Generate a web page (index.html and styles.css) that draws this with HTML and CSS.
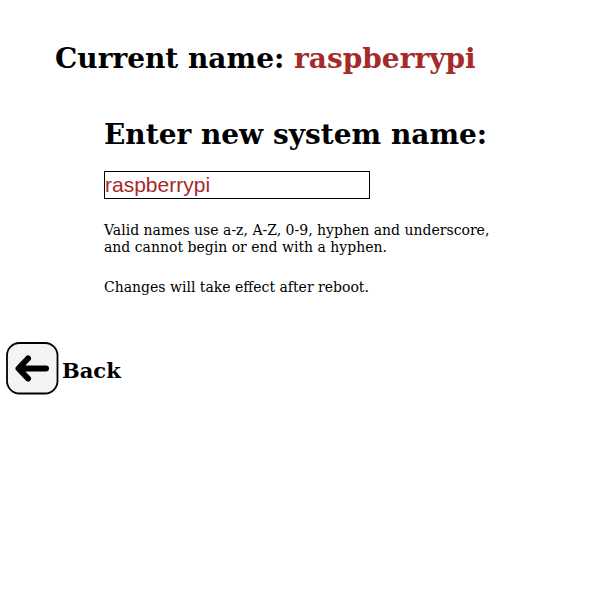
FILE: index.html
```html
<!DOCTYPE html>
<html lang="en">
    <head>
        <meta charset="UTF-8">
        <meta name="viewport" content="width=device-width, initial-scale=1.0">
        <title>System name</title>
        <link rel="stylesheet" href="styles.css">
    </head>
    <body>

        <h1 class="current">Current name: <span class="name">raspberrypi</span></h1>

        <!-- new name form -->
        <form class="rename">
            <h1><label for="hostname">Enter new system name:</label></h1>
            <input type="text" id="hostname" name="hostname" class="name" value="raspberrypi">
            <p>Valid names use a-z, A-Z, 0-9, hyphen and underscore,<br>
            and cannot begin or end with a hyphen.</p>
            <p class="note">Changes will take effect after reboot.</p>
        </form>

        <!-- back link -->
        <a href="index.html" class="back">
            <svg width="54" height="54" viewBox="0 0 54 54" aria-hidden="true">
                <rect x="2" y="2" width="50.500" height="50.500" rx="12.500" fill="#f4f4f4" stroke="#000" stroke-width="1.800"/>
                <path d="M23 17.500L13.500 27.500L23 37.500M14 27.500H41" fill="none" stroke="#000" stroke-width="6" stroke-linecap="round" stroke-linejoin="round"/>
            </svg>
            <span>Back</span>
        </a>

    </body>
</html>
```

FILE: styles.css
```css
body {
    font-family: "DejaVu Serif", serif;
    margin: 0;
    padding: 41px 5px;
    color: #000;
    background-color: #fff;
}

h1 {
    font-size: 28px;
    line-height: 36px;
    margin: 0;
}

.current {
    padding-left: 50px;
}

.name {
    color: brown;
}

.rename {
    margin: 40px 0 0 99px;
}

.rename input {
    display: block;
    box-sizing: border-box;
    width: 266px;
    height: 28px;
    margin: 18px 0 23px;
    padding: 1px 0;
    border: 1px solid #000;
    font-family: "Liberation Sans", sans-serif;
    font-size: 21px;
}

.rename p {
    font-size: 14px;
    line-height: 17px;
    margin: 0;
}

.rename .note {
    margin-top: 23px;
}

.back {
    display: inline-flex;
    align-items: center;
    gap: 3px;
    margin-top: 45px;
    color: #000;
    font-size: 21px;
    font-weight: bold;
    text-decoration: none;
}

.back span {
    padding-top: 4px;
}
```
